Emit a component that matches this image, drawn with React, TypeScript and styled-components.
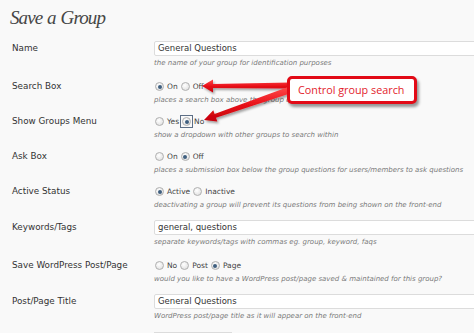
import React from "react";
import styled, { createGlobalStyle } from "styled-components";

const GlobalStyle = createGlobalStyle`
  html, body {
    margin: 0;
    padding: 0;
    background: #f9f9f9;
    overflow: hidden;
  }
`;

const Page = styled.div`
  position: relative;
  width: 474px;
  height: 333px;
  overflow: hidden;
  background: #f9f9f9;
  padding-left: 12px;
  box-sizing: border-box;
`;

const Title = styled.h2`
  margin: 0 0 7px -2px;
  padding-top: 8px;
  font-family: "Liberation Serif", Georgia, serif;
  font-style: italic;
  font-weight: normal;
  font-size: 19px;
  line-height: 20px;
  color: #464646;
  letter-spacing: -0.9px;
  word-spacing: 1px;
`;

const Row = styled.div<{ $input?: boolean }>`
  display: grid;
  grid-template-columns: 142px 1fr;
  align-items: start;
  padding: ${(p) => (p.$input ? "6px 0 6px" : "6px 0 4px")};
`;

const Label = styled.div<{ $input?: boolean }>`
  font-family: "DejaVu Sans", Verdana, sans-serif;
  font-size: 8.8px;
  line-height: ${(p) => (p.$input ? "15px" : "13px")};
  color: #333;
`;

const Field = styled.div`
  display: flex;
  flex-direction: column;
  min-width: 0;
`;

const TextBox = styled.div`
  height: 13px;
  width: 400px;
  border: 1px solid #dcdcdc;
  background: #fff;
  font-family: "DejaVu Sans", Verdana, sans-serif;
  font-size: 8.5px;
  line-height: 13px;
  color: #333;
  padding-left: 3px;
  border-radius: 2px;
`;

const Hint = styled.div`
  margin-top: 2px;
  font-family: "DejaVu Sans", Verdana, sans-serif;
  font-style: italic;
  font-size: 7px;
  line-height: 10px;
  color: #7a7a7a;
  white-space: nowrap;
`;

const Options = styled.div`
  display: flex;
  align-items: center;
  height: 13px;
  gap: 3px;
  padding-left: 1px;
`;

const Option = styled.label`
  display: flex;
  align-items: center;
  gap: 3px;
  font-family: "DejaVu Sans", Verdana, sans-serif;
  font-size: 7.5px;
  color: #444;
`;

const FocusRing = styled.span<{ $focus?: boolean }>`
  display: flex;
  padding: 1px;
  border: 1px solid ${(p) => (p.$focus ? "#5d6f86" : "transparent")};
  margin: -2px;
`;

const Radio = styled.span<{ $checked?: boolean }>`
  position: relative;
  width: 7px;
  height: 7px;
  border-radius: 50%;
  border: 1px solid #b0b0b0;
  background: radial-gradient(circle at 40% 35%, #ffffff 0%, #e2e2e2 80%);
  box-sizing: content-box;

  &::after {
    content: "";
    display: ${(p) => (p.$checked ? "block" : "none")};
    position: absolute;
    left: 1.5px;
    top: 1.5px;
    width: 4px;
    height: 4px;
    border-radius: 50%;
    background: #3f5f7f;
  }
`;

const SelectRow = styled.div`
  display: grid;
  grid-template-columns: 142px 1fr;
  padding-top: 5px;
`;

const Select = styled.div`
  display: flex;
  align-items: flex-start;
  gap: 0;
`;

const SelectField = styled.div`
  width: 76px;
  height: 13px;
  border: 1px solid #dcdcdc;
  background: #fff;
`;

const SelectButton = styled.span`
  width: 10px;
  height: 12px;
  margin-top: 2px;
  background: #b8b8b8;
`;

const Arrows = styled.svg`
  position: absolute;
  left: 0;
  top: 0;
  pointer-events: none;
`;

const Callout = styled.div`
  position: absolute;
  left: 287px;
  top: 76px;
  width: 130px;
  height: 28px;
  box-sizing: border-box;
  border: 3px solid #e20a16;
  border-radius: 5px;
  background: #fff;
  box-shadow: 2px 3px 3px rgba(0, 0, 0, 0.4);
  padding-left: 8px;
  font-family: "Open Sans", "Liberation Sans", sans-serif;
  font-size: 10.8px;
  line-height: 22px;
  color: #e3212b;
`;

type Opt = { text: string; checked?: boolean; focus?: boolean };

type FieldDef =
  | { label: string; kind: "input"; value: string; hint: string }
  | { label: string; kind: "radio"; options: Opt[]; hint: string };

const fields: FieldDef[] = [
  {
    label: "Name",
    kind: "input",
    value: "General Questions",
    hint: "the name of your group for identification purposes",
  },
  {
    label: "Search Box",
    kind: "radio",
    options: [{ text: "On", checked: true }, { text: "Off" }],
    hint: "places a search box above the group questions",
  },
  {
    label: "Show Groups Menu",
    kind: "radio",
    options: [{ text: "Yes" }, { text: "No", checked: true, focus: true }],
    hint: "show a dropdown with other groups to search within",
  },
  {
    label: "Ask Box",
    kind: "radio",
    options: [{ text: "On" }, { text: "Off", checked: true }],
    hint: "places a submission box below the group questions for users/members to ask questions",
  },
  {
    label: "Active Status",
    kind: "radio",
    options: [{ text: "Active", checked: true }, { text: "Inactive" }],
    hint: "deactivating a group will prevent its questions from being shown on the front-end",
  },
  {
    label: "Keywords/Tags",
    kind: "input",
    value: "general, questions",
    hint: "separate keywords/tags with commas eg. group, keyword, faqs",
  },
  {
    label: "Save WordPress Post/Page",
    kind: "radio",
    options: [{ text: "No" }, { text: "Post" }, { text: "Page", checked: true }],
    hint: "would you like to have a WordPress post/page saved & maintained for this group?",
  },
  {
    label: "Post/Page Title",
    kind: "input",
    value: "General Questions",
    hint: "WordPress post/page title as it will appear on the front-end",
  },
];

export default function App() {
  return (
    <>
      <GlobalStyle />
      <Page>
        <Title>Save a Group</Title>
        {fields.map((f) => (
          <Row key={f.label} $input={f.kind === "input"}>
            <Label $input={f.kind === "input"}>{f.label}</Label>
            <Field>
              {f.kind === "input" ? (
                <TextBox>{f.value}</TextBox>
              ) : (
                <Options>
                  {f.options.map((o) => (
                    <Option key={o.text}>
                      <FocusRing $focus={o.focus}>
                        <Radio $checked={o.checked} />
                      </FocusRing>
                      {o.text}
                    </Option>
                  ))}
                </Options>
              )}
              <Hint>{f.hint}</Hint>
            </Field>
          </Row>
        ))}
        <SelectRow>
          <span />
          <Select>
            <SelectField />
            <SelectButton />
          </Select>
        </SelectRow>

        <Arrows width="474" height="333" viewBox="0 0 474 333">
          <defs>
            <filter id="sh" x="-20%" y="-50%" width="140%" height="200%">
              <feDropShadow dx="1.5" dy="2" stdDeviation="1.2" floodColor="#000" floodOpacity="0.35" />
            </filter>
            <linearGradient id="red" x1="0" y1="0" x2="0" y2="1">
              <stop offset="0" stopColor="#ff4a4a" />
              <stop offset="0.5" stopColor="#e8121a" />
              <stop offset="1" stopColor="#c40008" />
            </linearGradient>
          </defs>
          <polygon
            filter="url(#sh)"
            fill="url(#red)"
            points="290,82.5 213,84 213,79.5 202,86 213,92.5 213,88 290,88.5"
          />
          <polygon
            filter="url(#sh)"
            fill="url(#red)"
            points="288,87 214.6,114 213.3,110.3 204,120 217.3,121.5 216,117.8 290,93.5"
          />
        </Arrows>
        <Callout>Control group search</Callout>
      </Page>
    </>
  );
}
